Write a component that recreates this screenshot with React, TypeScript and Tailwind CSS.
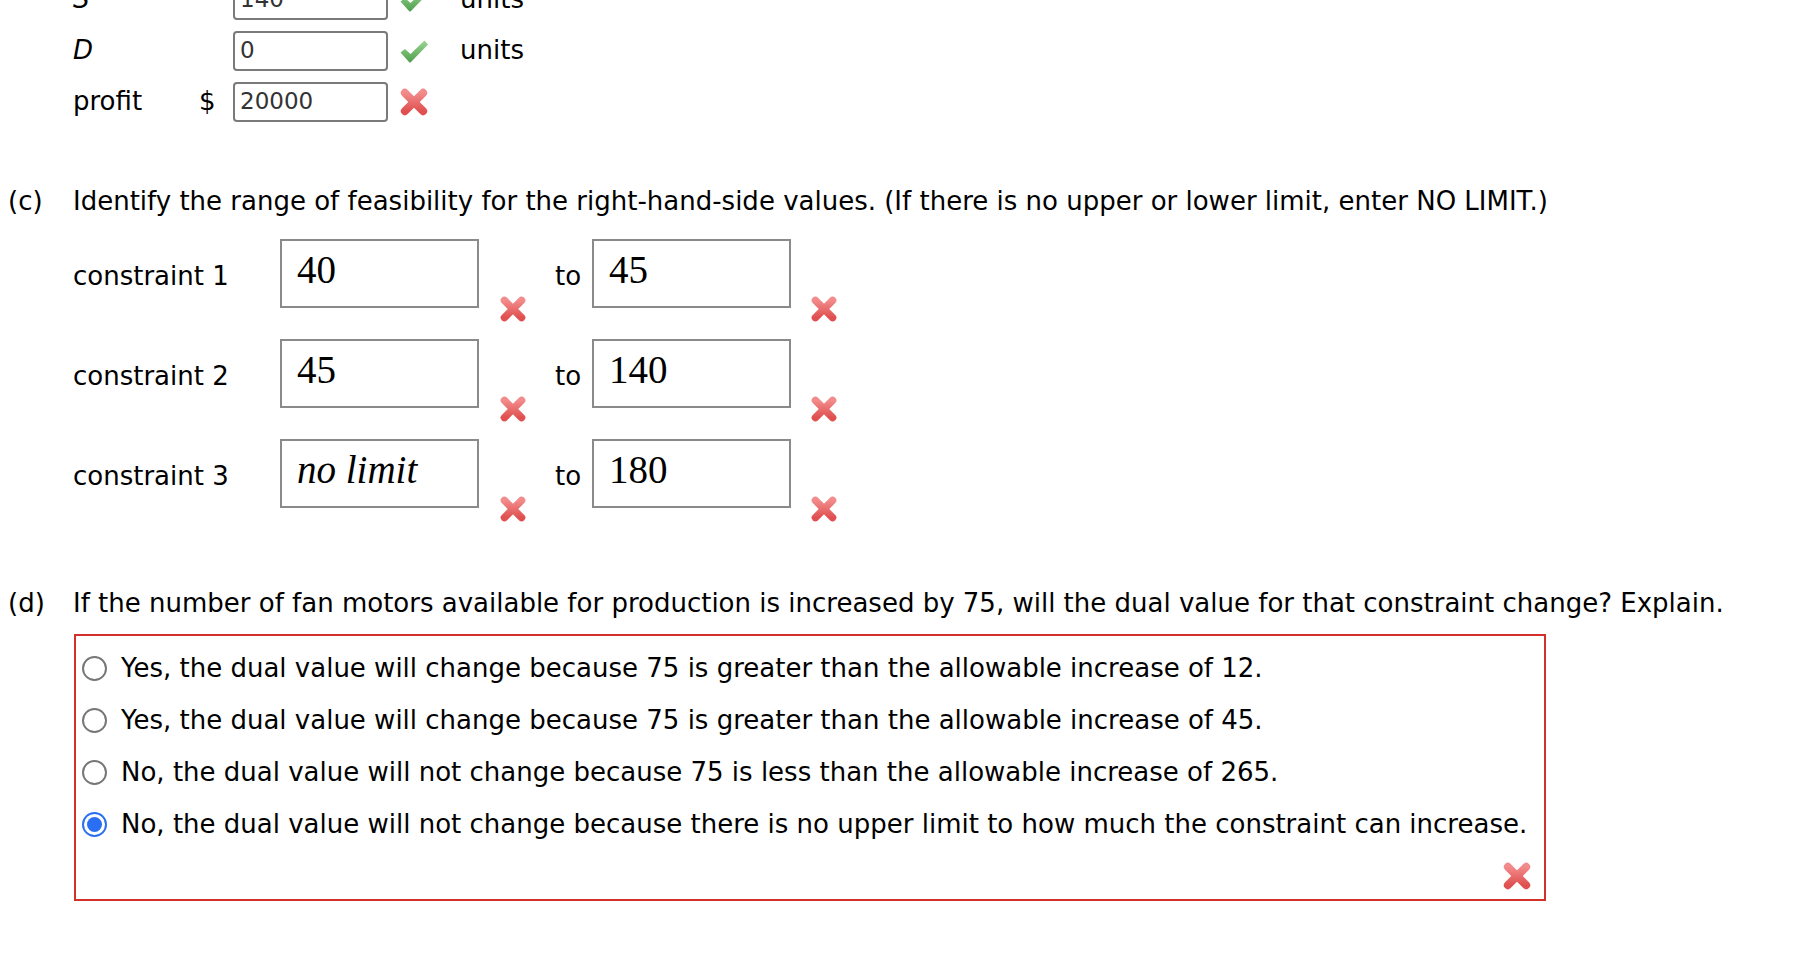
import React from "react";

const sans = { fontFamily: '"DejaVu Sans", Verdana, sans-serif' };

function Check() {
  return (
    <svg width="32" height="28" viewBox="0 0 32 28">
      <defs>
        <linearGradient id="gk" x1="0" y1="0" x2="0" y2="1">
          <stop offset="0" stopColor="#9ad694" />
          <stop offset="1" stopColor="#4f9f4c" />
        </linearGradient>
      </defs>
      <path d="M2.5 15.5 L7 12 L12.5 17 L26.5 3.5 L30 7.5 L13 25 Q12 26 11 25 Z" fill="url(#gk)" strokeLinejoin="round" />
    </svg>
  );
}

function Cross({ size = 28 }: { size?: number }) {
  return (
    <svg width={size} height={size} viewBox="0 0 28 28">
      <defs>
        <linearGradient id="gx" x1="0" y1="0" x2="0" y2="1">
          <stop offset="0" stopColor="#f28b8b" />
          <stop offset="1" stopColor="#e05050" />
        </linearGradient>
      </defs>
      <g stroke="url(#gx)" strokeWidth="7" strokeLinecap="round">
        <line x1="6" y1="6" x2="22" y2="22" />
        <line x1="22" y1="6" x2="6" y2="22" />
      </g>
    </svg>
  );
}

function SmallBox({ value }: { value: string }) {
  return (
    <div className="w-[155px] h-[40px] border-2 border-[#7a7a7a] rounded-[4px] flex items-center px-[5px] text-[23px] text-[#333]">
      {value}
    </div>
  );
}

function RangeBox({ value, italic }: { value: string; italic?: boolean }) {
  return (
    <div
      className={`w-[199px] h-[69px] border-2 border-[#8a8a8a] flex items-center pl-[15px] pb-[6px] text-[39px] text-black ${italic ? "italic" : ""}`}
      style={{ fontFamily: '"Liberation Serif", "DejaVu Serif", serif' }}
    >
      {value}
    </div>
  );
}

function Radio({ checked }: { checked?: boolean }) {
  if (checked)
    return (
      <div className="w-[25px] h-[25px] shrink-0 rounded-full border-[2px] border-[#2a6ff3] flex items-center justify-center bg-white">
        <div className="w-[15px] h-[15px] rounded-full bg-[#2a6ff3]" />
      </div>
    );
  return <div className="w-[25px] h-[25px] shrink-0 rounded-full border-2 border-[#777] bg-white" />;
}

export default function App() {
  const ranges = [
    { label: "constraint 1", lo: "40", hi: "45" },
    { label: "constraint 2", lo: "45", hi: "140" },
    { label: "constraint 3", lo: "no limit", hi: "180", italicLo: true },
  ];
  const options = [
    "Yes, the dual value will change because 75 is greater than the allowable increase of 12.",
    "Yes, the dual value will change because 75 is greater than the allowable increase of 45.",
    "No, the dual value will not change because 75 is less than the allowable increase of 265.",
    "No, the dual value will not change because there is no upper limit to how much the constraint can increase.",
  ];

  return (
    <div className="w-[1804px] h-[978px] overflow-hidden bg-white text-black text-[26px]" style={sans}>
      {/* top answers */}
      <div className="mt-[-26px] pl-[73px]">
        {[
          { label: "S", value: "140", ok: true, italic: true },
          { label: "D", value: "0", ok: true, italic: true },
          { label: "profit", value: "20000", ok: false, dollar: true },
        ].map(r => (
          <div key={r.label} className="flex items-center h-[51px]">
            <span className={`w-[126px] ${r.italic ? "italic" : ""}`}>{r.label}</span>
            <span className="w-[34px]">{r.dollar ? "$" : ""}</span>
            <SmallBox value={r.value} />
            <span className="w-[72px] pl-[10px] flex items-center">{r.ok ? <Check /> : <Cross size={32} />}</span>
            {r.ok && <span>units</span>}
          </div>
        ))}
      </div>

      {/* (c) */}
      <div className="flex mt-[58px] leading-[32px]">
        <span className="w-[73px] pl-[8px]">(c)</span>
        <span>Identify the range of feasibility for the right-hand-side values. (If there is no upper or lower limit, enter NO LIMIT.)</span>
      </div>

      <div className="pl-[73px] mt-[22px] flex flex-col gap-[31px]">
        {ranges.map(r => (
          <div key={r.label} className="flex items-center">
            <span className="w-[207px] pt-[6px]">{r.label}</span>
            <RangeBox value={r.lo} italic={r.italicLo} />
            <div className="w-[67px] self-end flex justify-center translate-y-[16px]">
              <Cross size={30} />
            </div>
            <span className="w-[46px] pl-[9px] pt-[6px]">to</span>
            <RangeBox value={r.hi} />
            <div className="w-[66px] self-end flex justify-center translate-y-[16px]">
              <Cross size={30} />
            </div>
          </div>
        ))}
      </div>

      {/* (d) */}
      <div className="flex mt-[79px] leading-[32px]">
        <span className="w-[73px] pl-[8px]">(d)</span>
        <span>If the number of fan motors available for production is increased by 75, will the dual value for that constraint change? Explain.</span>
      </div>

      <div className="ml-[74px] mt-[15px] w-[1472px] h-[267px] border-2 border-[#d3302b] pt-[6px] pl-[6px] pr-[10px] flex flex-col">
        {options.map((o, i) => (
          <div key={i} className="flex items-center h-[52px] gap-[14px]">
            <Radio checked={i === 3} />
            <span>{o}</span>
          </div>
        ))}
        <div className="flex justify-end mt-[10px] pr-[1px]">
          <Cross size={32} />
        </div>
      </div>
    </div>
  );
}
